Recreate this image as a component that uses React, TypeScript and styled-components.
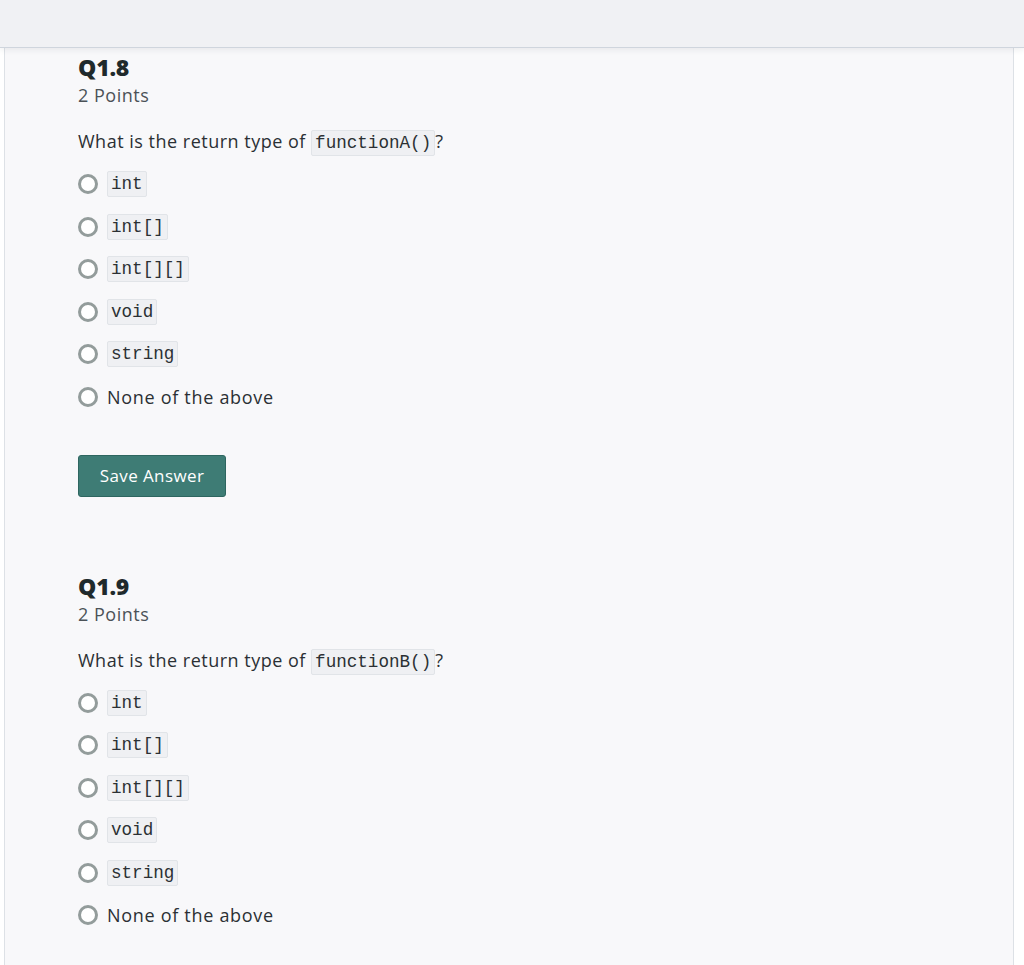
import React from 'react';
import styled, { createGlobalStyle } from 'styled-components';

const GlobalStyle = createGlobalStyle`
  html, body {
    margin: 0;
    padding: 0;
    background: #ffffff;
    font-family: "Open Sans", Lato, sans-serif;
    color: #2b3034;
  }
`;

interface Question {
  id: string;
  points: number;
  fn: string;
  options: { label: string; code: boolean }[];
  showSave: boolean;
}

const baseOptions = [
  { label: 'int', code: true },
  { label: 'int[]', code: true },
  { label: 'int[][]', code: true },
  { label: 'void', code: true },
  { label: 'string', code: true },
  { label: 'None of the above', code: false },
];

const questions: Question[] = [
  { id: 'Q1.8', points: 2, fn: 'functionA()', options: baseOptions, showSave: true },
  { id: 'Q1.9', points: 2, fn: 'functionB()', options: baseOptions, showSave: false },
];

export default function App() {
  return (
    <>
      <GlobalStyle />
      <TopBar />
      <Panel>
        {questions.map((q) => (
          <QuestionBlock key={q.id}>
            <QuestionTitle>{q.id}</QuestionTitle>
            <Points>{q.points} Points</Points>
            <Prompt>
              What is the return type of <Code>{q.fn}</Code>?
            </Prompt>
            <OptionList>
              {q.options.map((o) => (
                <OptionRow key={o.label}>
                  <Radio />
                  {o.code ? <Code>{o.label}</Code> : <OptionText>{o.label}</OptionText>}
                </OptionRow>
              ))}
            </OptionList>
            {q.showSave && <SaveButton>Save Answer</SaveButton>}
          </QuestionBlock>
        ))}
      </Panel>
    </>
  );
}

const TopBar = styled.div`
  height: 47px;
  background: #f0f1f4;
  border-bottom: 1px solid #cfd5dd;
  box-shadow: 0 2px 6px rgba(40, 50, 70, 0.08);
  position: relative;
  z-index: 1;
`;

const Panel = styled.main`
  margin-left: 4px;
  width: 1010px;
  min-height: 917px;
  background: #f8f8fa;
  border-left: 1px solid #dde1e6;
  border-right: 1px solid #dde1e6;
  padding: 6px 0 0 73px;
  box-sizing: border-box;
`;

const QuestionBlock = styled.section`
  display: flex;
  flex-direction: column;
  align-items: flex-start;
  margin-bottom: 76px;
`;

const QuestionTitle = styled.h2`
  margin: 0;
  font-size: 23px;
  line-height: 26px;
  font-weight: 800;
  color: #1f2a2c;
  letter-spacing: -0.2px;
`;

const Points = styled.div`
  margin-top: 3px;
  font-size: 18px;
  line-height: 24px;
  letter-spacing: 0.5px;
  color: #4b5257;
`;

const Prompt = styled.p`
  margin: 22px 0 0;
  font-size: 18px;
  line-height: 24px;
  letter-spacing: 0.5px;
  color: #2b3034;
`;

const Code = styled.code`
  display: inline-block;
  font-family: "Liberation Mono", "Courier New", monospace;
  font-size: 17.6px;
  line-height: 24px;
  letter-spacing: 0;
  padding: 0 3px;
  background: #eff0f3;
  border: 1px solid #e1e4e8;
  border-radius: 2px;
  color: #2b3034;
`;

const OptionList = styled.div`
  display: flex;
  flex-direction: column;
  gap: 16.5px;
  margin-top: 15px;
`;

const OptionRow = styled.label`
  display: flex;
  align-items: center;
  gap: 9px;
  height: 26px;
`;

const Radio = styled.span`
  width: 14px;
  height: 14px;
  border: 3px solid #939c9b;
  border-radius: 50%;
  background: #fff;
  flex-shrink: 0;
`;

const OptionText = styled.span`
  font-size: 18px;
  line-height: 24px;
  letter-spacing: 0.7px;
  color: #2b3034;
`;

const SaveButton = styled.button`
  margin-top: 45px;
  width: 148px;
  height: 42px;
  background: #3e7c75;
  border: 1px solid #2e6660;
  border-radius: 3px;
  color: #ffffff;
  font-family: "Open Sans", Lato, sans-serif;
  font-size: 17px;
  letter-spacing: 0.4px;
  cursor: pointer;
`;
